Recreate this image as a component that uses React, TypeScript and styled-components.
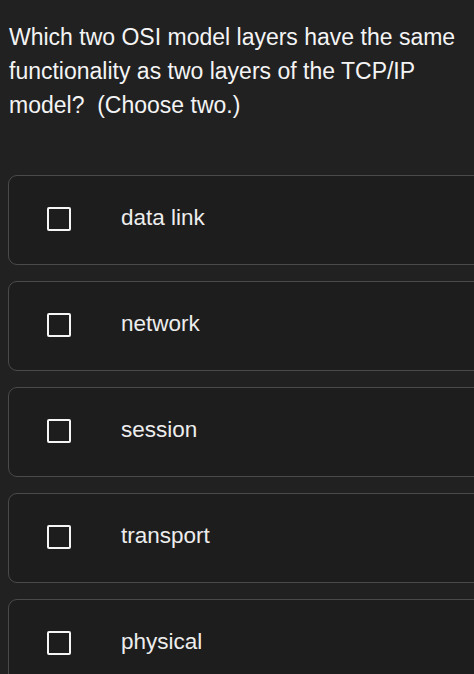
import styled, { createGlobalStyle } from "styled-components";

const Global = createGlobalStyle`
  html, body {
    margin: 0;
    padding: 0;
    background-color: #212121;
  }
  body {
    font-family: "Liberation Sans", Arial, sans-serif;
    color: #f2f2f2;
  }
`;

const Page = styled.div`
  width: 474px;
  height: 674px;
  overflow: hidden;
  background-color: #212121;
  padding: 20px 0 0 9px;
  box-sizing: border-box;
`;
const Question = styled.p`
  margin: 0 0 53px 0;
  font-size: 23px;
  line-height: 34px;
  color: #f4f4f4;
  white-space: pre;
`;
const Options = styled.div`
  display: flex;
  flex-direction: column;
  gap: 16px;
  margin-left: -1px;
`;
const Option = styled.label`
  display: flex;
  align-items: center;
  height: 90px;
  width: 520px;
  box-sizing: border-box;
  border: 1.5px solid #4a4a4a;
  border-radius: 9px;
  background-color: #1d1d1d;
  padding-left: 38px;
  cursor: pointer;
`;
const Box = styled.span`
  width: 24px;
  height: 24px;
  box-sizing: border-box;
  border: 2.5px solid #f5f5f5;
  border-radius: 2px;
  margin-top: -3px;
  flex-shrink: 0;
`;
const Label = styled.span`
  margin-left: 50px;
  margin-top: -4px;
  font-size: 22.5px;
  color: #ededed;
`;

const choices = ["data link", "network", "session", "transport", "physical"];

export default function App() {
  return (
    <Page>
      <Global />
      <Question>
        {"Which two OSI model layers have the same\nfunctionality as two layers of the TCP/IP\nmodel?  (Choose two.)"}
      </Question>
      <Options>
        {choices.map((c) => (
          <Option key={c}>
            <Box />
            <Label>{c}</Label>
          </Option>
        ))}
      </Options>
    </Page>
  );
}
